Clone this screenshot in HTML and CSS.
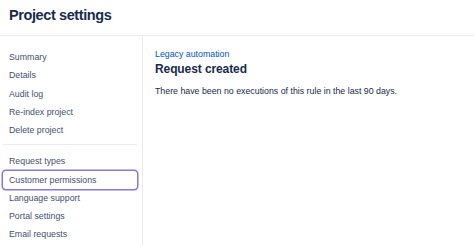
FILE: index.html
```html
<!DOCTYPE html>
<html lang="en">
<head>
    <meta charset="UTF-8">
    <meta name="viewport" content="width=device-width, initial-scale=1.0">
    <title>Project settings</title>
    <link rel="stylesheet" href="styles.css">
</head>
<body>
    <header class="page-header">
        <h1>Project settings</h1>
    </header>

    <div class="layout">
        <nav class="sidebar">
            <div class="nav-group">
                <a class="nav-item" href="#">Summary</a>
                <a class="nav-item" href="#">Details</a>
                <a class="nav-item" href="#">Audit log</a>
                <a class="nav-item" href="#">Re-index project</a>
                <a class="nav-item" href="#">Delete project</a>
            </div>
            <hr class="nav-divider">
            <div class="nav-group">
                <a class="nav-item" href="#">Request types</a>
                <a class="nav-item focused" href="#">Customer permissions</a>
                <a class="nav-item" href="#">Language support</a>
                <a class="nav-item" href="#">Portal settings</a>
                <a class="nav-item" href="#">Email requests</a>
            </div>
        </nav>

        <main class="content">
            <a class="breadcrumb" href="#">Legacy automation</a>
            <h2>Request created</h2>
            <p class="empty-note">There have been no executions of this rule in the last 90 days.</p>
        </main>
    </div>
</body>
</html>
```

FILE: styles.css
```css
:root {
    --text: #172b4d;
    --text-subtle: #42526e;
    --link: #0052cc;
    --border: #ebecf0;
    --focus: #8777d9;
}

* {
    margin: 0;
    padding: 0;
    box-sizing: border-box;
}

body {
    font-family: 'Liberation Sans', Arial, sans-serif;
    color: var(--text);
    background: #ffffff;
    height: 245px;
    overflow: hidden;
}

.page-header {
    height: 36px;
    border-bottom: 1px solid var(--border);
    padding: 3px 9px 0;
}

.page-header h1 {
    font-size: 14.5px;
    font-weight: 700;
    letter-spacing: -0.4px;
    line-height: 24px;
}

.layout {
    display: flex;
    height: 209px;
}

.sidebar {
    width: 143px;
    flex-shrink: 0;
    border-right: 1px solid var(--border);
    padding: 12px 5px 0 2px;
}

.nav-group {
    display: flex;
    flex-direction: column;
}

.nav-item {
    display: block;
    height: 18.25px;
    line-height: 18.25px;
    padding-left: 7px;
    font-size: 8.8px;
    color: var(--text-subtle);
    text-decoration: none;
    border-radius: 3px;
}

.nav-item.focused {
    box-shadow: 0 0 0 1.5px var(--focus);
    margin: 0 0 0 1px;
    padding-left: 6px;
}

.nav-divider {
    border: none;
    border-top: 1px solid var(--border);
    margin: 5px 0 7px 1px;
}

.content {
    padding: 12px 12px 0;
}

.breadcrumb {
    display: block;
    font-size: 8.8px;
    line-height: 12px;
    color: var(--link);
    text-decoration: none;
}

.content h2 {
    font-size: 12px;
    font-weight: 700;
    line-height: 18px;
    letter-spacing: -0.1px;
}

.empty-note {
    margin-top: 7px;
    font-size: 8.8px;
    line-height: 12px;
}
```
